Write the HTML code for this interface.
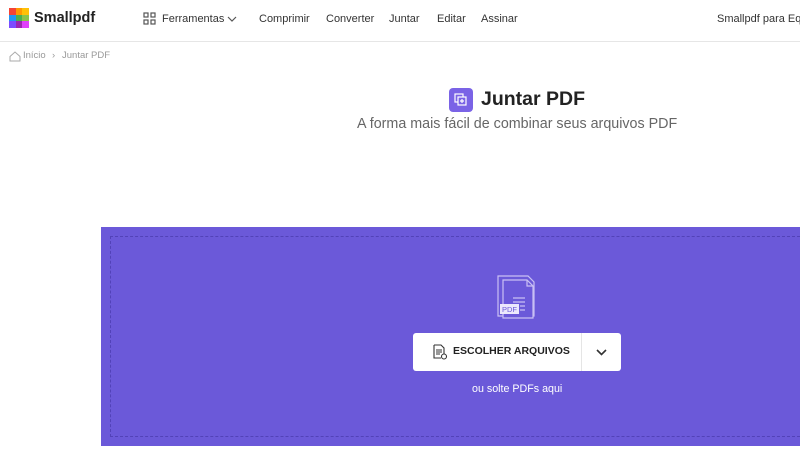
<!DOCTYPE html>
<html><head><meta charset="utf-8">
<style>
*{margin:0;padding:0;box-sizing:border-box}
body{width:800px;height:451px;overflow:hidden;background:#fff;font-family:"Liberation Sans",sans-serif;color:#222;position:relative}
.nav{position:absolute;top:0;left:0;width:800px;height:42px;border-bottom:1px solid #e6e6e6}
.abs{position:absolute;white-space:nowrap}
.navt{font-size:11px;color:#333;top:13px}
.crumb{font-size:9.5px;color:#999;top:50px}
.drop{position:absolute;left:101px;top:227px;width:699px;height:219px;background:#6b59d9}
.dash{position:absolute;left:9px;top:9px;right:0;bottom:9px;border:1px dashed #5242b8;border-right:none}
.btn{position:absolute;left:413px;top:333px;width:208px;height:38px;background:#fff;border-radius:3px}
</style></head><body>
<div class="nav">
  <svg class="abs" style="left:9px;top:8px" width="20" height="20" viewBox="0 0 20 20">
    <rect x="0" y="0" width="7" height="7" fill="#f44336"/><rect x="7" y="0" width="6" height="7" fill="#ff9800"/><rect x="13" y="0" width="7" height="7" fill="#ffc107"/>
    <rect x="0" y="7" width="7" height="6" fill="#2196f3"/><rect x="7" y="7" width="6" height="6" fill="#4caf50"/><rect x="13" y="7" width="7" height="6" fill="#8bc34a"/>
    <rect x="0" y="13" width="7" height="7" fill="#7c4dff"/><rect x="7" y="13" width="6" height="7" fill="#9c27b0"/><rect x="13" y="13" width="7" height="7" fill="#e040fb"/>
  </svg>
  <div class="abs" style="left:34px;top:10px;font-size:14.5px;font-weight:bold;color:#222">Smallpdf</div>
  <svg class="abs" style="left:143px;top:12px" width="13" height="13" viewBox="0 0 13 13" fill="none" stroke="#555" stroke-width="1.2"><rect x="1" y="1" width="4" height="4"/><rect x="8" y="1" width="4" height="4"/><rect x="1" y="8" width="4" height="4"/><rect x="8" y="8" width="4" height="4"/></svg>
  <div class="abs navt" style="left:162px">Ferramentas</div>
  <svg class="abs" style="left:227px;top:16px" width="10" height="6" viewBox="0 0 10 6"><path d="M1 1l4 4 4-4" stroke="#555" fill="none" stroke-width="1.2"/></svg>
  <div class="abs navt" style="left:259px">Comprimir</div>
  <div class="abs navt" style="left:326px">Converter</div>
  <div class="abs navt" style="left:389px">Juntar</div>
  <div class="abs navt" style="left:437px">Editar</div>
  <div class="abs navt" style="left:481px">Assinar</div>
  <div class="abs navt" style="left:717px">Smallpdf para Equipes</div>
</div>
<svg class="abs" style="left:9px;top:51px" width="12" height="11" viewBox="0 0 12 11"><path d="M1 5.5L6 1l5 4.5V10H1z" stroke="#aaa" fill="none"/></svg>
<div class="abs crumb" style="left:23px">Início</div>
<div class="abs crumb" style="left:52px">›</div>
<div class="abs crumb" style="left:62px">Juntar PDF</div>

<div class="abs" style="left:449px;top:88px;width:24px;height:24px;background:#7a63e6;border-radius:4px"></div>
<svg class="abs" style="left:453px;top:92px" width="16" height="16" viewBox="0 0 16 16" fill="none" stroke="#fff" stroke-width="1.2"><rect x="2" y="2" width="8" height="8"/><rect x="5" y="5" width="8" height="8" fill="#7a63e6"/><path d="M9 7v4M7 9h4"/></svg>
<div class="abs" style="left:481px;top:88px;font-size:19.5px;font-weight:bold;color:#222">Juntar PDF</div>
<div class="abs" style="left:357px;top:116px;font-size:14.3px;color:#666">A forma mais fácil de combinar seus arquivos PDF</div>

<div class="drop"><div class="dash"></div></div>
<svg class="abs" style="left:496px;top:274px" width="44" height="46" viewBox="0 0 44 46" fill="none" stroke="#c9c0f4" stroke-width="1.2">
  <path d="M2 2h30l6 6v34H2z" />
  <path d="M7 6h24l6 6v32H7z" fill="#6b59d9"/>
  <path d="M31 6v6h6"/>
  <path d="M17 24h12M17 28h12M24 32h5M24 36h5"/>
  <rect x="4" y="30" width="19" height="10" fill="#ece8fc" stroke="none"/>
  <text x="13.5" y="38" font-family="Liberation Sans" font-size="7.5" fill="#6b59d9" stroke="none" text-anchor="middle">PDF</text>
</svg>
<div class="btn">
  <svg class="abs" style="left:19px;top:11px" width="16" height="16" viewBox="0 0 16 16" fill="none" stroke="#333" stroke-width="1.1"><path d="M2 1h7l3 3v6M2 1v13h7"/><path d="M4 6h6M4 8h6M4 10h4"/><circle cx="12" cy="12.5" r="2.5"/></svg>
  <div class="abs" style="left:40px;top:12px;font-size:10.5px;font-weight:bold;color:#222">ESCOLHER ARQUIVOS</div>
  <div class="abs" style="left:168px;top:0;width:1px;height:38px;background:#e5e5e5"></div>
  <svg class="abs" style="left:183px;top:16px" width="11" height="7" viewBox="0 0 11 7"><path d="M1 1l4.5 4.5L10 1" stroke="#333" fill="none" stroke-width="1.6"/></svg>
</div>
<div class="abs" style="left:472px;top:383px;font-size:10.7px;color:#fff">ou solte PDFs aqui</div>
</body></html>
